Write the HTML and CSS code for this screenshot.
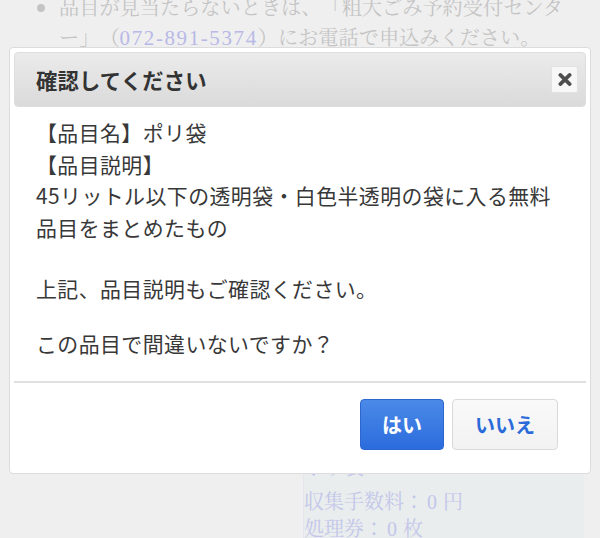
FILE: index.html
```html
<!DOCTYPE html>
<html lang="ja">
<head>
<meta charset="utf-8">
<title>確認してください</title>
<link rel="stylesheet" href="styles.css">
</head>
<body>
<div class="page">
  <ul class="notes">
    <li>品目が見当たらないときは、「粗大ごみ予約受付センタ<br>ー」（<a class="tel" href="#">072-891-5374</a>）にお電話で申込みください。</li>
  </ul>
  <div class="result">
    <div class="result-line item">ポリ袋</div>
    <div class="result-line">収集手数料：<span class="num">0</span>円</div>
    <div class="result-line">処理券：<span class="num">0</span>枚</div>
  </div>
</div>

<div class="dialog" role="dialog">
  <div class="titlebar">
    <span class="title">確認してください</span>
    <button class="close" aria-label="close">
      <svg width="14" height="13" viewBox="0 0 14 13"><path d="M2.3 1.9 L11.7 11.1 M11.7 1.9 L2.3 11.1" stroke="#4d4d4d" stroke-width="3.6" stroke-linecap="round" fill="none"/></svg>
    </button>
  </div>
  <div class="content">
    <div class="block">【品目名】ポリ袋<br>【品目説明】<br>45リットル以下の透明袋・白色半透明の袋に入る無料<br>品目をまとめたもの</div>
    <div class="block second">上記、品目説明もご確認ください。</div>
    <div class="block third">この品目で間違いないですか？</div>
  </div>
  <div class="buttonpane">
    <button class="btn btn-primary">はい</button>
    <button class="btn btn-default">いいえ</button>
  </div>
</div>
</body>
</html>
```

FILE: styles.css
```css
html, body {
  margin: 0;
  padding: 0;
}
body {
  background: #efefef;
  width: 600px;
  height: 538px;
  overflow: hidden;
  position: relative;
  font-family: "Noto Sans CJK JP", sans-serif;
  text-spacing-trim: space-all;
}
.page {
  margin-top: -8px;
}
.notes {
  margin: 0;
  padding: 0 0 0 59px;
  list-style: disc;
  color: #c4c4c4;
  font-family: "Noto Serif CJK JP", "Liberation Serif", "Noto Sans CJK JP", serif;
  font-size: 20.2px;
  line-height: 30px;
  white-space: nowrap;
}
.tel {
  color: #b9b9e8;
  text-decoration: underline;
  font-family: "Liberation Serif", serif;
  font-size: 21px;
  letter-spacing: 1.6px;
}
.result {
  margin: 0 16px 0 303px;
  padding-top: 401px;
  background: #e9eded;
  border-left: 1px solid #e3e6ea;
  color: #c3c6ea;
  font-family: "Noto Serif CJK JP", "Liberation Serif", "Noto Sans CJK JP", serif;
  font-size: 20px;
  line-height: 25px;
  white-space: nowrap;
}
.result-line.item {
  margin-bottom: 9px;
}
.num {
  font-family: "Liberation Serif", serif;
  padding: 0 6px 0 3px;
}

.dialog {
  position: absolute;
  left: 9px;
  top: 47px;
  width: 572px;
  padding: 4px;
  background: #fff;
  border: 1px solid #dcdcdc;
  border-radius: 4px;
}
.titlebar {
  height: 53px;
  display: flex;
  align-items: center;
  justify-content: space-between;
  padding: 0 7px 0 21px;
  border: 1px solid #dedede;
  border-radius: 4px;
  background: linear-gradient(#ebebeb, #dadada);
}
.title {
  font-size: 21.3px;
  font-weight: bold;
  color: #333;
  letter-spacing: 0.2px;
}
.close {
  width: 27px;
  height: 27px;
  padding: 0;
  margin: 0;
  display: flex;
  align-items: center;
  justify-content: center;
  background: #f7f7f7;
  border: 1px solid #e2e2e2;
  border-radius: 2px;
}
.content {
  padding: 10px 10px 22px 22px;
  font-size: 20.9px;
  letter-spacing: 0.45px;
  line-height: 31.5px;
  color: #383838;
  white-space: nowrap;
}
.block.second {
  margin-top: 29.5px;
}
.block.third {
  margin-top: 23.5px;
}
.buttonpane {
  border-top: 2px solid #e0e0e0;
  padding: 16px 28px 19px 0;
  display: flex;
  justify-content: flex-end;
  gap: 8px;
}
.btn {
  height: 51px;
  margin: 0;
  padding: 0 21px;
  font-family: "Noto Sans CJK JP", sans-serif;
  font-size: 20px;
  font-weight: bold;
  border-radius: 4px;
  line-height: 1;
}
.btn-primary {
  color: #fff;
  background: linear-gradient(#4b8ae8, #2b6cdd);
  border: 1px solid #2d66cf;
}
.btn-default {
  color: #2a6bd9;
  background: linear-gradient(#f9f9f9, #f2f2f2);
  border: 1px solid #d9d9d9;
  padding: 0 22px;
}
```
